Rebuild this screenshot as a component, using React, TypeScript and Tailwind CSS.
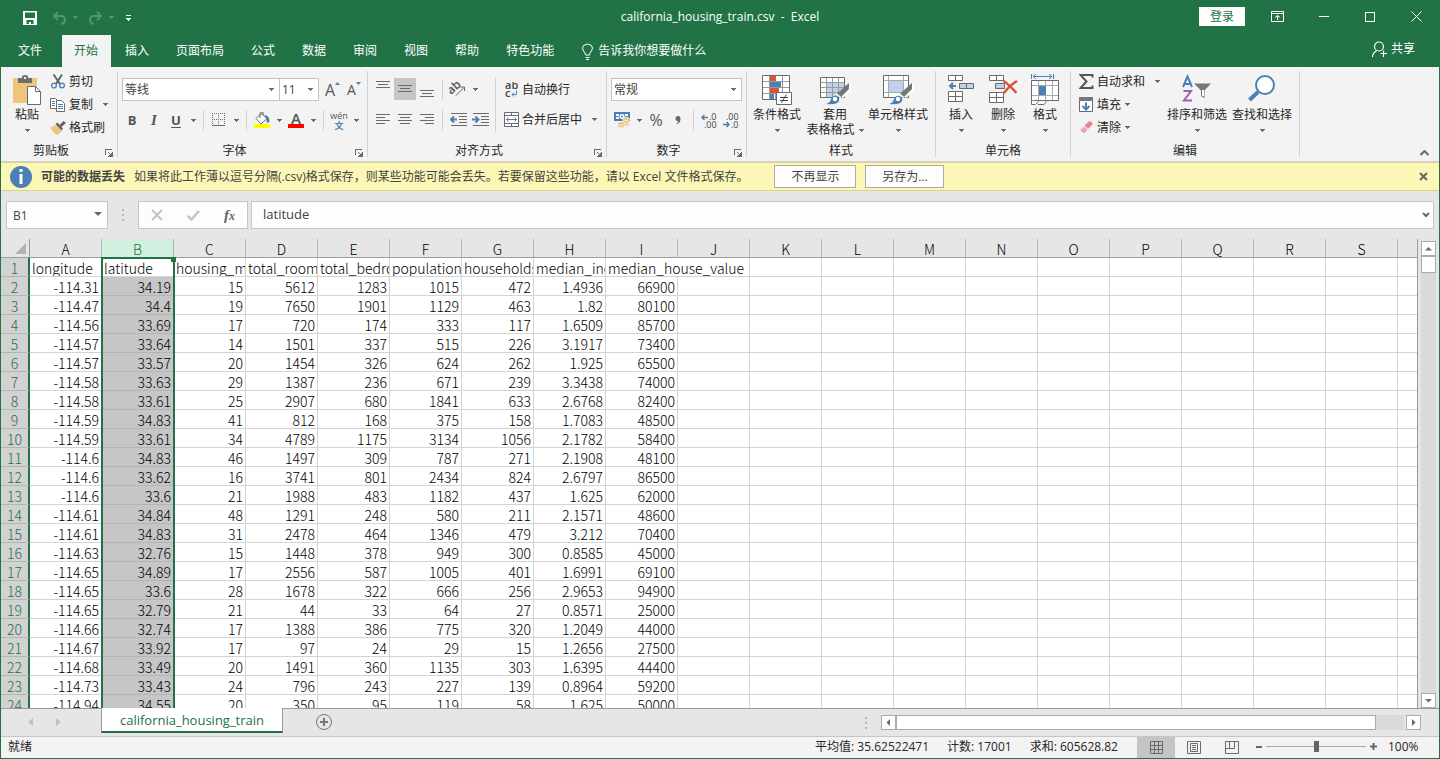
import type { ReactNode } from 'react';

const GRAY = '#6a6a6a';
const BLUE = '#4a80b5';

const TABS = ['插入', '页面布局', '公式', '数据', '审阅', '视图', '帮助', '特色功能'];

const COLUMNS = 'ABCDEFGHIJKLMNOPQRS'.split('');

const HEADERS = [
  'longitude',
  'latitude',
  'housing_median_age',
  'total_rooms',
  'total_bedrooms',
  'population',
  'households',
  'median_income',
  'median_house_value',
];

const ROWS = [
  ['-114.31', '34.19', '15', '5612', '1283', '1015', '472', '1.4936', '66900'],
  ['-114.47', '34.4', '19', '7650', '1901', '1129', '463', '1.82', '80100'],
  ['-114.56', '33.69', '17', '720', '174', '333', '117', '1.6509', '85700'],
  ['-114.57', '33.64', '14', '1501', '337', '515', '226', '3.1917', '73400'],
  ['-114.57', '33.57', '20', '1454', '326', '624', '262', '1.925', '65500'],
  ['-114.58', '33.63', '29', '1387', '236', '671', '239', '3.3438', '74000'],
  ['-114.58', '33.61', '25', '2907', '680', '1841', '633', '2.6768', '82400'],
  ['-114.59', '34.83', '41', '812', '168', '375', '158', '1.7083', '48500'],
  ['-114.59', '33.61', '34', '4789', '1175', '3134', '1056', '2.1782', '58400'],
  ['-114.6', '34.83', '46', '1497', '309', '787', '271', '2.1908', '48100'],
  ['-114.6', '33.62', '16', '3741', '801', '2434', '824', '2.6797', '86500'],
  ['-114.6', '33.6', '21', '1988', '483', '1182', '437', '1.625', '62000'],
  ['-114.61', '34.84', '48', '1291', '248', '580', '211', '2.1571', '48600'],
  ['-114.61', '34.83', '31', '2478', '464', '1346', '479', '3.212', '70400'],
  ['-114.63', '32.76', '15', '1448', '378', '949', '300', '0.8585', '45000'],
  ['-114.65', '34.89', '17', '2556', '587', '1005', '401', '1.6991', '69100'],
  ['-114.65', '33.6', '28', '1678', '322', '666', '256', '2.9653', '94900'],
  ['-114.65', '32.79', '21', '44', '33', '64', '27', '0.8571', '25000'],
  ['-114.66', '32.74', '17', '1388', '386', '775', '320', '1.2049', '44000'],
  ['-114.67', '33.92', '17', '97', '24', '29', '15', '1.2656', '27500'],
  ['-114.68', '33.49', '20', '1491', '360', '1135', '303', '1.6395', '44400'],
  ['-114.73', '33.43', '24', '796', '243', '227', '139', '0.8964', '59200'],
  ['-114.94', '34.55', '20', '350', '95', '119', '58', '1.625', '50000'],
];

const Arrow = ({ className = 'text-[#6a6a6a]' }: { className?: string }) => (
  <svg className={className} width="5" height="3" viewBox="0 0 5 3" shapeRendering="crispEdges">
    <path d="M0 0h5v1H4v1H3v1H2V2H1V1H0z" fill="currentColor" />
  </svg>
);

const ArrowButton = ({ label }: { label: string }) => (
  <button aria-label={label} className="flex h-[22px] w-3 items-center justify-center">
    <Arrow />
  </button>
);

const IconButton = ({ label, active, children }: { label: string; active?: boolean; children: ReactNode }) => (
  <button
    aria-label={label}
    className={`flex h-[22px] w-[22px] items-center justify-center text-[#555] ${active ? 'bg-[#c5c5c5]' : ''}`}
  >
    {children}
  </button>
);

const Divider = () => <div className="mx-1 h-[21px] w-px bg-[#d2d2d2]" />;

const Group = ({ title, width, launcher, children }: { title: string; width: string; launcher?: boolean; children: ReactNode }) => (
  <section className={`flex flex-col border-r border-[#d2d2d2] ${width}`}>
    <div className="flex h-[73px]">{children}</div>
    <div className="flex h-[13px] items-center justify-center">
      <span className={`flex-1 text-center leading-[13px] ${launcher ? 'pr-1' : ''}`}>{title}</span>
      {launcher && (
        <button aria-label={`${title}设置`} className="mt-1 mr-1">
          <svg width="8" height="8" viewBox="0 0 8 8" shapeRendering="crispEdges">
            <path d="M0.5 6V0.5H7M3 3l3 3M7.5 3v4.5H3" fill="none" stroke={GRAY} />
            <path d="M7 3v4H3z" fill={GRAY} />
          </svg>
        </button>
      )}
    </div>
  </section>
);

const BigButton = ({ icon, width, lines }: { icon: ReactNode; width: string; lines: string[] }) => (
  <button className={`flex flex-col items-center self-start pt-[3px] leading-4 whitespace-nowrap ${width}`}>
    <span className="flex h-[33px] items-start justify-center">{icon}</span>
    <span>{lines[0]}</span>
    <span className="flex h-[14px] items-center gap-1">
      {lines[1]}
      <Arrow />
    </span>
  </button>
);

const SmallButton = ({ icon, text, arrow }: { icon: ReactNode; text: string; arrow?: string }) => (
  <button className="flex h-[21px] items-center whitespace-nowrap">
    <span className="flex w-[22px] justify-center">{icon}</span>
    {text}
    {arrow && (
      <span className={arrow}>
        <Arrow />
      </span>
    )}
  </button>
);

const Combo = ({ label, value, width }: { label: string; value: string; width: string }) => (
  <div className={`relative flex ${width}`}>
    <select
      aria-label={label}
      className="h-[23px] w-full appearance-none border border-[#c3c3c3] bg-white pl-0.5 text-[12px] text-[#444]"
    >
      <option>{value}</option>
    </select>
    <span className="pointer-events-none absolute top-2.5 right-1.5">
      <Arrow />
    </span>
  </div>
);

/* Horizontal rules used by the alignment icons: [y, x, width] */
const Lines = ({ rows }: { rows: number[][] }) => (
  <svg width="14" height="16" viewBox="0 0 14 16" fill={GRAY} shapeRendering="crispEdges">
    {rows.map(([y, x, w]) => (
      <rect key={y} x={x} y={y} width={w} height="1" />
    ))}
  </svg>
);

const Indent = ({ right }: { right?: boolean }) => (
  <svg width="17" height="14" viewBox="0 0 17 14">
    <path d="M1 1.5h16M9 4.5h8M9 7.5h8M9 10.5h8M1 13.5h16" stroke={GRAY} fill="none" />
    <path
      d={right ? 'M0 7.5h6M3.5 4.5l3 3-3 3' : 'M7 7.5H1M4 4.5l-3 3 3 3'}
      stroke={BLUE}
      strokeWidth="2"
      fill="none"
    />
  </svg>
);

const PasteIcon = () => (
  <svg width="30" height="32" viewBox="0 0 30 32">
    <path d="M1 4h24v25H1z" fill="#edc57c" />
    <path d="M6 4h4V3q0-2 3-2t3 2v1h4v5H6z" fill="#6e6e6e" />
    <path d="M12 3h2v2h-2z" fill="#f3f3f3" />
    <path d="M15.5 12.5h8l5 5v13h-13z" fill="#fff" stroke={GRAY} />
    <path d="M23.5 12.5v5h5" fill="none" stroke={GRAY} />
  </svg>
);

const CutIcon = () => (
  <svg width="14" height="15" viewBox="0 0 14 15" fill="none">
    <path d="M2.5 0.5L9 10M11 0.5L5 10" stroke="#666" strokeWidth="2" />
    <circle cx="3" cy="11.5" r="2.4" stroke={BLUE} strokeWidth="1.3" />
    <circle cx="11" cy="11.5" r="2.4" stroke={BLUE} strokeWidth="1.3" />
  </svg>
);

const CopyIcon = () => (
  <svg width="16" height="14" viewBox="0 0 16 14">
    <path d="M0.5 0.5h5l2 2v8h-7z" fill="#fff" stroke={GRAY} />
    <path d="M2 3.5h3M2 5.5h3M2 7.5h3" stroke={BLUE} />
    <path d="M6.5 2.5h5l3 3v8h-8z" fill="#fff" stroke={GRAY} />
    <path d="M8 6.5h5M8 8.5h5M8 10.5h5" stroke={BLUE} />
  </svg>
);

const PainterIcon = () => (
  <svg width="16" height="14" viewBox="0 0 16 14">
    <path d="M0 6.5l6-2.5 6 6-4.5 4q-3-1-4.5-3.5z" fill="#edc57c" />
    <path d="M5.5 3l2-1.5 5.5 6-1.5 2z" fill="#666" />
    <path d="M9.5 4l4-4L16 2l-4.5 4z" fill="#666" />
  </svg>
);

const Brush = () => (
  <>
    <path d="M33 8v7l-9 9-5-4z" fill="#fff" />
    <path d="M30 9v6l-8 8-4-3.5z" fill="#777" />
    <path d="M17 19.5l5 4.5" stroke="#f3f3f3" strokeWidth="1.5" />
    <path d="M7 30q4-1 5-5 2-4 6-3 3 2 2 5-2 4-13 3z" fill={BLUE} />
    <circle cx="16" cy="25" r="2.2" fill="#fff" />
  </>
);

const ConditionalIcon = () => (
  <svg width="32" height="31" viewBox="0 0 32 31">
    <path d="M1.5 1.5h27v24h-27z" fill="#fff" />
    <path d="M1.5 7.5h27M1.5 13.5h27M1.5 19.5h27M8.5 1.5v24M14.5 1.5v24M21.5 1.5v24" fill="none" stroke="#9a9a9a" />
    <path d="M9 2h6v5H9zM9 14h9v5H9z" fill="#d65532" />
    <path d="M9 8h11v5H9zM9 20h4v5H9z" fill={BLUE} />
    <path d="M1.5 1.5h27v24h-27z" fill="none" stroke={GRAY} />
    <path d="M15.5 18.5h15v12h-15z" fill="#fff" stroke={GRAY} />
    <path d="M19 23.5h8M19 26.5h8M25.5 20.5l-5 8" stroke="#444" fill="none" />
  </svg>
);

const TableStyleIcon = () => (
  <svg width="32" height="31" viewBox="0 0 32 31">
    <path d="M1.5 3.5h24v20h-24z" fill="#fff" />
    <path d="M8 9h17v14H8z" fill="#bed3ea" />
    <path d="M1.5 8.5h24M1.5 13.5h24M1.5 18.5h24M7.5 3.5v20M13.5 3.5v20M19.5 3.5v20" fill="none" stroke="#9a9a9a" />
    <path d="M1.5 3.5h24v20h-24z" fill="none" stroke={GRAY} />
    <Brush />
  </svg>
);

const CellStyleIcon = () => (
  <svg width="32" height="31" viewBox="0 0 32 31">
    <path d="M1.5 1.5h25v22h-25z" fill="#fff" />
    <path d="M1.5 6.5h25M1.5 18.5h25M6.5 1.5v22M21.5 1.5v22" fill="none" stroke="#aaa" />
    <path d="M7 7h14v11H7z" fill="#bed3ea" />
    <path d="M1.5 1.5h25v22h-25z" fill="none" stroke={GRAY} />
    <Brush />
  </svg>
);

const InsertIcon = () => (
  <svg width="28" height="30" viewBox="0 0 28 30">
    <g fill="#fff" stroke={GRAY}>
      <path d="M1.5 1.5h14v5h-14zM8.5 1.5v5M1.5 17.5h14v10h-14zM1.5 22.5h14M8.5 17.5v10" />
      <path d="M12.5 9.5h14v5h-14zM19.5 9.5v5" fill="#bed3ea" />
    </g>
    <path d="M9 12H3M6 9l-3 3 3 3" stroke={BLUE} strokeWidth="2" fill="none" />
  </svg>
);

const DeleteIcon = () => (
  <svg width="30" height="30" viewBox="0 0 30 30">
    <g fill="#fff" stroke={GRAY}>
      <path d="M1.5 1.5h14v5h-14zM8.5 1.5v5M1.5 18.5h14v10h-14zM1.5 23.5h14M8.5 18.5v10" />
      <path d="M7.5 9.5h9v5h-9z" fill="#bed3ea" />
    </g>
    <path d="M15.5 7q5 3 13 12M29 7q-8 5-13 12" stroke="#d65532" strokeWidth="2.5" fill="none" />
  </svg>
);

const FormatIcon = () => (
  <svg width="30" height="32" viewBox="0 0 30 32">
    <path d="M1.5 0v5M23.5 0v5M3 2.5h19M6 0L3 2.5 6 5M19 0l3 2.5L19 5" stroke={BLUE} fill="none" />
    <path d="M1.5 6.5h27v20h-27z" fill="#fff" />
    <path d="M1.5 11.5h27M1.5 21.5h27M8.5 6.5v20M15.5 6.5v20M22.5 6.5v20" stroke="#aaa" fill="none" />
    <path d="M1.5 6.5h27v20h-27z" fill="none" stroke={GRAY} />
    <path d="M9 12h7v9H9z" fill={BLUE} />
    <path d="M1.5 26.5v4h4l3-3M8 30.5h6l3-4" fill="#fff" stroke={GRAY} />
  </svg>
);

const SortFilterIcon = () => (
  <svg width="30" height="30" viewBox="0 0 30 30">
    <path d="M12 9.5h17l-6.5 7V24l-3.5-2v-5.5z" fill="#777" />
    <path d="M20 16h2v6h-2z" fill="#fff" />
    <path d="M1 13L5.5 2.5 10 13M3 10h5" fill="none" stroke={BLUE} strokeWidth="2" />
    <path d="M1.5 17H9l-7 9.5h8" fill="none" stroke="#9660b9" strokeWidth="2" />
  </svg>
);

const FindIcon = () => (
  <svg width="28" height="28" viewBox="0 0 28 28">
    <path d="M1.5 26L10 18" stroke={BLUE} strokeWidth="4" />
    <circle cx="17" cy="11" r="9" fill="#fff" stroke={BLUE} strokeWidth="2" />
  </svg>
);

const TitleBar = () => (
  <header className="grid h-[35px] grid-cols-3 items-center pb-0.5 text-white">
    <div className="flex items-center pt-0.5 pl-[22px]">
      <button aria-label="保存" className="w-[29px]">
        <svg width="14" height="14" viewBox="0 0 14 14">
          <path d="M0 0h14v14H0zM2 1.5V7h10V1.5zM3.5 9v4H6v-2h2v2h2.5V9z" fill="#fff" fillRule="evenodd" />
        </svg>
      </button>
      <button aria-label="撤消" className="flex items-center gap-1.5 text-[#559371]">
        <svg width="15" height="14" viewBox="0 0 15 14" fill="none" stroke="currentColor" strokeWidth="2">
          <path d="M6 1L2 5l4 4M2 5h7q4 0 4 4 0 3-4 4" />
        </svg>
        <Arrow className="text-[#559371]" />
      </button>
      <button aria-label="恢复" className="ml-2.5 flex items-center gap-1.5 text-[#559371]">
        <svg width="15" height="14" viewBox="0 0 15 14" fill="none" stroke="currentColor" strokeWidth="2">
          <path d="M9 1l4 4-4 4M13 5H6Q2 5 2 9q0 3 4 4" />
        </svg>
        <Arrow className="text-[#559371]" />
      </button>
      <button aria-label="自定义快速访问工具栏" className="ml-3 flex flex-col items-center gap-0.5">
        <span className="h-px w-[5px] bg-white" />
        <Arrow className="text-white" />
      </button>
    </div>
    <h1 className="text-center whitespace-pre">california_housing_train.csv  -  Excel</h1>
    <div className="flex items-center justify-end">
      <button className="mr-[26px] h-[19px] w-[46px] bg-white text-[#217346]">登录</button>
      <button aria-label="功能区显示选项" className="w-12">
        <svg width="13" height="11" viewBox="0 0 13 11" fill="none" stroke="#fff">
          <path d="M0.5 0.5h12v10H0.5zM0.5 2.5h12M6.5 9V4.5M4 6.5l2.5-2 2.5 2" />
        </svg>
      </button>
      <button aria-label="最小化" className="flex w-[46px] items-center">
        <span className="h-px w-2.5 bg-white" />
      </button>
      <button aria-label="最大化" className="flex w-[46px] items-center">
        <span className="h-2.5 w-2.5 border border-white" />
      </button>
      <button aria-label="关闭" className="w-7">
        <svg width="11" height="11" viewBox="0 0 11 11" stroke="#fff">
          <path d="M0.5 0.5l10 10M10.5 0.5l-10 10" />
        </svg>
      </button>
    </div>
  </header>
);

const TabBar = () => (
  <nav className="flex h-8 gap-px text-white">
    <button className="w-[60px] pr-0.5">文件</button>
    <button className="bg-[#f3f3f3] pr-[13px] pl-3 text-[#217346]">开始</button>
    {TABS.map((tab) => (
      <button key={tab} className="px-[13px]">
        {tab}
      </button>
    ))}
    <button className="flex items-center gap-1 px-[13px]">
      <svg width="13" height="17" viewBox="0 0 13 17" fill="none" stroke="#fff">
        <path d="M4.5 12q0-2-2-4-2-3 0-5.500 4-3 8 0 2 2.500 0 5.500-2 2-2 4zM4.500 14.500h4M5 16.500h3" />
      </svg>
      告诉我你想要做什么
    </button>
    <button className="mr-6 ml-auto flex items-center gap-1 pb-1">
      <svg width="15" height="17" viewBox="0 0 15 17" fill="none" stroke="#fff" strokeWidth="1.2">
        <circle cx="7" cy="5.5" r="4.5" />
        <path d="M0.5 16q0-4 4-6M8.5 12.5H15M11.5 9.5V16" />
      </svg>
      共享
    </button>
  </nav>
);

const Ribbon = () => (
  <div className="flex h-[95px] border-b border-[#d2d2d2] bg-[#f3f3f3] py-1 text-[#262626]">
    <Group title="剪贴板" width="w-[117px]" launcher>
      <BigButton icon={<PasteIcon />} width="w-[52px]" lines={['粘贴']} />
      <div className="-ml-1.5 flex flex-col gap-0.5">
        <SmallButton icon={<CutIcon />} text="剪切" />
        <SmallButton icon={<CopyIcon />} text="复制" arrow="ml-2.5" />
        <SmallButton icon={<PainterIcon />} text="格式刷" />
      </div>
    </Group>

    <Group title="字体" width="w-[250px]" launcher>
      <div className="flex flex-col gap-2 pt-[7px] pl-[3px]">
        <div className="flex items-center pl-px">
          <Combo label="字体" value="等线" width="w-[158px]" />
          <div className="-ml-px flex">
            <Combo label="字号" value="11" width="w-[40px]" />
          </div>
          <button aria-label="增大字号" className="ml-1.5 flex h-[22px] w-[18px] items-center text-[16px] text-[#555]">
            A
            <svg className="mb-3" width="5" height="3" viewBox="0 0 5 3">
              <path d="M0 3L2.5 0 5 3z" fill={BLUE} />
            </svg>
          </button>
          <button aria-label="减小字号" className="ml-1 flex h-[22px] w-[18px] items-center text-[14px] text-[#555]">
            A
            <svg className="mb-3" width="5" height="3" viewBox="0 0 5 3">
              <path d="M0 0h5L2.5 3z" fill={BLUE} />
            </svg>
          </button>
        </div>
        <div className="flex items-center">
          <IconButton label="加粗">
            <b className="text-[13px]">B</b>
          </IconButton>
          <IconButton label="倾斜">
            <i className="font-['Liberation_Serif'] text-[15px] font-bold">I</i>
          </IconButton>
          <IconButton label="下划线">
            <b className="text-[13px] underline underline-offset-2">U</b>
          </IconButton>
          <ArrowButton label="下划线类型" />
          <Divider />
          <IconButton label="边框">
            <svg width="14" height="14" viewBox="0 0 14 14" stroke={GRAY} fill="none">
              <path d="M0 0.5h13M0 6.5h13M0.5 0v12M6.5 0v12M12.5 0v12" strokeDasharray="1 1" />
              <path d="M0 12.5h13" />
            </svg>
          </IconButton>
          <ArrowButton label="边框类型" />
          <Divider />
          <IconButton label="填充颜色">
            <svg width="16" height="16" viewBox="0 0 16 16">
              <path d="M2 6.5L7 1.5l6 5-6 5.5z" fill="#fff" stroke={GRAY} />
              <path d="M6 6V2q0-2 2-2t1 3" fill="none" stroke={GRAY} />
              <path d="M10.5 3q5 0 5 7L13 11l-1-5z" fill={BLUE} />
              <path d="M0 12h16v4H0z" fill="#ff0" />
            </svg>
          </IconButton>
          <ArrowButton label="其他填充颜色" />
          <IconButton label="字体颜色">
            <span className="h-4 w-4 border-b-4 border-[#f00] text-[15px] leading-3 font-semibold">A</span>
          </IconButton>
          <ArrowButton label="其他字体颜色" />
          <Divider />
          <IconButton label="显示拼音">
            <span className="flex flex-col items-center text-[9px] leading-[10px]">
              wén
              <span className="text-[9px] leading-[9px] font-bold text-[#4a80b5]">文</span>
            </span>
          </IconButton>
          <ArrowButton label="拼音选项" />
        </div>
      </div>
    </Group>

    <Group title="对齐方式" width="w-[239px]" launcher>
      <div className="flex flex-col gap-2 pt-[7px] pl-1">
        <div className="flex items-center">
          <IconButton label="顶端对齐"><Lines rows={[[0, 0, 14], [3, 2, 10], [6, 0, 14]]} /></IconButton>
          <IconButton label="垂直居中" active><Lines rows={[[4, 0, 14], [7, 2, 10], [10, 0, 14]]} /></IconButton>
          <IconButton label="底端对齐"><Lines rows={[[9, 0, 14], [12, 2, 10], [15, 0, 14]]} /></IconButton>
          <Divider />
          <IconButton label="方向">
            <svg width="18" height="16" viewBox="0 0 18 16">
              <text x="0" y="11" fontSize="12" fontWeight="600" fill="#555" transform="rotate(-42 5 10)">ab</text>
              <path d="M7 14.5l8-8M11.5 6h4v4" fill="none" stroke={GRAY} />
            </svg>
          </IconButton>
          <ArrowButton label="方向选项" />
        </div>
        <div className="flex items-center">
          <IconButton label="左对齐"><Lines rows={[[3, 0, 14], [6, 0, 9], [9, 0, 14], [12, 0, 9]]} /></IconButton>
          <IconButton label="居中"><Lines rows={[[3, 0, 14], [6, 2, 10], [9, 0, 14], [12, 2, 10]]} /></IconButton>
          <IconButton label="右对齐"><Lines rows={[[3, 0, 14], [6, 5, 9], [9, 0, 14], [12, 5, 9]]} /></IconButton>
          <Divider />
          <IconButton label="减少缩进量"><Indent /></IconButton>
          <IconButton label="增加缩进量"><Indent right /></IconButton>
        </div>
      </div>
      <div className="mx-1 mt-1.5 h-[55px] w-px bg-[#d2d2d2]" />
      <div className="flex flex-col gap-[9px] pt-2">
        <SmallButton
          icon={
            <svg width="13" height="16" viewBox="0 0 13 16">
              <text x="0" y="7" fontSize="11" fill="#444" fontWeight="600">ab</text>
              <text x="0" y="15" fontSize="11" fill="#444" fontWeight="600">c</text>
              <path d="M11.5 8.5v4H7M9 10.5l-2 2 2 2" fill="none" stroke={BLUE} />
            </svg>
          }
          text="自动换行"
        />
        <SmallButton
          icon={
            <svg width="15" height="15" viewBox="0 0 15 15" fill="none">
              <path d="M0.5 0.5h14v14H0.5z" fill="#fff" stroke={GRAY} />
              <path d="M0.5 3.5h14M0.5 11.5h14M7.5 0.5v3M7.5 11.5v3" stroke={GRAY} />
              <path d="M2 7.5h11M4.5 5.5l-2 2 2 2M10.5 5.5l2 2-2 2" stroke={BLUE} />
            </svg>
          }
          text="合并后居中"
          arrow="ml-2.5"
        />
      </div>
    </Group>

    <Group title="数字" width="w-[140px]" launcher>
      <div className="flex flex-col gap-2 pt-[7px] pl-1">
        <Combo label="数字格式" value="常规" width="w-[131px]" />
        <div className="flex items-center">
          <IconButton label="会计数字格式">
            <svg width="17" height="16" viewBox="0 0 17 16">
              <path d="M0 0h16v9H0z" fill={BLUE} />
              <path d="M2 2h3v2H2zM11 2h3v2h-3zM2 5h3v2H2z" fill="#fff" />
              <circle cx="8" cy="4.500" r="2.500" fill="#fff" />
              <circle cx="8" cy="4.500" r="1" fill={BLUE} />
              <g fill="#edc57c" stroke="#f3f3f3" strokeWidth="0.8">
                <ellipse cx="12" cy="12" rx="3.5" ry="1.8" />
                <ellipse cx="12" cy="9.5" rx="3.5" ry="1.8" />
                <ellipse cx="12" cy="7" rx="3.5" ry="1.8" />
                <ellipse cx="7" cy="14" rx="3.5" ry="1.8" />
                <ellipse cx="7" cy="11.5" rx="3.5" ry="1.8" />
              </g>
            </svg>
          </IconButton>
          <ArrowButton label="会计格式选项" />
          <IconButton label="百分比样式"><span className="text-[16px]">%</span></IconButton>
          <IconButton label="千位分隔样式">
            <svg width="6" height="9" viewBox="0 0 6 9">
              <path d="M0.5 2.5Q0.5 0 3 0t2.5 3Q5.5 7 1 8.5q2-2 2-3.500-2.500 0-2.500-2.500z" fill="#666" />
            </svg>
          </IconButton>
          <Divider />
          <IconButton label="增加小数位数">
            <svg width="16" height="15" viewBox="0 0 16 15" fontSize="9" fill="#444">
              <text x="8" y="7">.0</text>
              <text x="3" y="15">.00</text>
              <path d="M7 4.5H1M3.5 2L1 4.5 3.5 7" stroke={BLUE} strokeWidth="1.5" fill="none" />
            </svg>
          </IconButton>
          <IconButton label="减少小数位数">
            <svg width="16" height="15" viewBox="0 0 16 15" fontSize="9" fill="#444">
              <text x="3" y="7">.00</text>
              <text x="8" y="15">.0</text>
              <path d="M0 11.5h6M3.5 9L6 11.5 3.5 14" stroke={BLUE} strokeWidth="1.5" fill="none" />
            </svg>
          </IconButton>
        </div>
      </div>
    </Group>

    <Group title="样式" width="w-[189px]">
      <div className="flex gap-[3px] pl-[5px]">
        <BigButton icon={<ConditionalIcon />} width="w-[50px]" lines={['条件格式']} />
        <BigButton icon={<TableStyleIcon />} width="w-[60px]" lines={['套用', '表格格式']} />
        <BigButton icon={<CellStyleIcon />} width="w-[60px]" lines={['单元格样式']} />
      </div>
    </Group>

    <Group title="单元格" width="w-[135px]">
      <div className="flex pl-1">
        <BigButton icon={<InsertIcon />} width="w-[42px]" lines={['插入']} />
        <BigButton icon={<DeleteIcon />} width="w-[42px]" lines={['删除']} />
        <BigButton icon={<FormatIcon />} width="w-[42px]" lines={['格式']} />
      </div>
    </Group>

    <Group title="编辑" width="w-[229px]">
      <div className="flex w-[93px] flex-col gap-0.5 pl-1">
        <SmallButton
          icon={
            <svg width="15" height="15" viewBox="0 0 15 15">
              <path d="M13.5 3.5V1h-12l6 6.5-6 6.5h12v-2.5" fill="none" stroke="#555" strokeWidth="2" />
            </svg>
          }
          text="自动求和"
          arrow="ml-2.5"
        />
        <SmallButton
          icon={
            <svg width="15" height="15" viewBox="0 0 15 15">
              <path d="M0.5 0.5h13v14H0.5z" fill="#fff" stroke={GRAY} />
              <path d="M0 0h14v4H0z" fill="#777" />
              <path d="M7 5.5v7M3.5 9L7 12.5 10.5 9" fill="none" stroke={BLUE} strokeWidth="2" />
            </svg>
          }
          text="填充"
          arrow="ml-1"
        />
        <SmallButton
          icon={
            <svg width="13" height="13" viewBox="0 0 13 13">
              <path d="M4.5 4.5l4.500-4q2-1 4 2.500l-5 5z" fill="#e8829a" />
              <path d="M4 5.5L7.5 9l-3 3Q1 11 0.5 8.5z" fill="#f0a5b6" />
            </svg>
          }
          text="清除"
          arrow="ml-1"
        />
      </div>
      <div className="flex gap-[5px] pl-[3px]">
        <BigButton icon={<SortFilterIcon />} width="w-[60px]" lines={['排序和筛选']} />
        <BigButton icon={<FindIcon />} width="w-[60px]" lines={['查找和选择']} />
      </div>
    </Group>

    <button aria-label="折叠功能区" className="mr-2.5 mb-px ml-auto self-end">
      <svg width="9" height="6" viewBox="0 0 9 6">
        <path d="M0.5 5l4-4 4 4" fill="none" stroke={GRAY} strokeWidth="2" />
      </svg>
    </button>
  </div>
);

const MessageBar = () => (
  <div className="flex h-[29px] items-center border-y border-[#d9d48c] bg-[#fcf7b6] text-[#444]">
    <svg className="mx-[9px]" width="22" height="22" viewBox="0 0 22 22">
      <circle cx="11" cy="11" r="11" fill={BLUE} />
      <path d="M9.5 3h3v3h-3zM9.5 8h3v10h-3z" fill="#fff" />
    </svg>
    <strong>可能的数据丢失</strong>
    <p className="ml-[9px]">如果将此工作薄以逗号分隔(.csv)格式保存，则某些功能可能会丢失。若要保留这些功能，请以 Excel 文件格式保存。</p>
    <button className="ml-[26px] h-[23px] w-[82px] border border-[#ababab] bg-[#fdfdfd]">不再显示</button>
    <button className="ml-[9px] h-[23px] w-[79px] border border-[#ababab] bg-[#fdfdfd]">另存为...</button>
    <button aria-label="关闭消息" className="mr-[11px] ml-auto">
      <svg width="9" height="9" viewBox="0 0 9 9" stroke="#666" strokeWidth="2">
        <path d="M1 1l7 7M8 1L1 8" />
      </svg>
    </button>
  </div>
);

const Dots = () => (
  <span className="flex flex-col gap-[3px]">
    <span className="h-0.5 w-0.5 bg-[#b5b5b5]" />
    <span className="h-0.5 w-0.5 bg-[#b5b5b5]" />
    <span className="h-0.5 w-0.5 bg-[#b5b5b5]" />
  </span>
);

const FormulaBar = () => (
  <div className="flex h-12 items-center px-[5px] text-[#444]">
    <div className="relative flex w-[102px]">
      <input aria-label="名称框" className="h-7 w-full border border-[#c6c6c6] bg-[#fdfdfd] px-1.5" defaultValue="B1" />
      <svg className="absolute top-[11px] right-1.5" width="8" height="4" viewBox="0 0 8 4">
        <path d="M0 0h8L4 4z" fill={GRAY} />
      </svg>
    </div>
    <span className="flex w-[30px] justify-center">
      <Dots />
    </span>
    <div className="flex h-7 w-[110px] items-center justify-around border border-[#c6c6c6] bg-[#fdfdfd]">
      <button aria-label="取消">
        <svg width="12" height="12" viewBox="0 0 12 12" stroke="#c3c3c3" strokeWidth="2">
          <path d="M1 1l10 10M11 1L1 11" />
        </svg>
      </button>
      <button aria-label="输入">
        <svg width="13" height="11" viewBox="0 0 13 11" fill="none" stroke="#c3c3c3" strokeWidth="2.5">
          <path d="M1 6l3.5 3.5L12 1" />
        </svg>
      </button>
      <button aria-label="插入函数" className="font-['Liberation_Serif'] text-[15px] leading-4 font-bold text-[#666] italic">
        f<span className="text-[12px]">x</span>
      </button>
    </div>
    <div className="relative ml-[3px] flex flex-1">
      <input
        aria-label="编辑栏"
        className="h-7 w-full border border-[#c6c6c6] bg-[#fdfdfd] px-[11px] pb-0.5 text-[13px]"
        defaultValue="latitude"
      />
      <svg className="absolute top-[11px] right-1" width="8" height="6" viewBox="0 0 8 6">
        <path d="M1 1l3 3 3-3" fill="none" stroke={GRAY} strokeWidth="2" />
      </svg>
    </div>
  </div>
);

const CELL = 'h-[19px] pt-0.5 pb-0 leading-4';

const Grid = () => (
  <div className="relative min-w-0 flex-1 overflow-hidden border-r border-[#9b9b9b]">
    <table className="w-full table-fixed border-separate border-spacing-0 font-['Noto_Sans_CJK_SC',sans-serif] text-[14px] font-light text-black">
      <colgroup>
        <col className="w-[29px]" />
        {COLUMNS.map((c) => (
          <col key={c} className="w-[72px]" />
        ))}
        <col />
      </colgroup>
      <thead>
        <tr className="bg-[#e6e6e6]">
          <th className="h-[19px] border-r border-b border-[#9b9b9b] p-0">
            <svg className="mr-[3px] ml-auto" width="11" height="11" viewBox="0 0 11 11">
              <path d="M11 0v11H0z" fill="#b2b2b2" />
            </svg>
          </th>
          {COLUMNS.map((c) => (
            <th
              key={c}
              scope="col"
              className={`${CELL} border-r border-b border-r-[#b4b4b4] border-b-[#9b9b9b] px-0 font-light ${
                c === 'B' ? 'bg-[#d2f0e0] text-[#217346]' : 'text-black'
              }`}
            >
              {c}
            </th>
          ))}
          <th className="border-b border-[#9b9b9b]" />
        </tr>
      </thead>
      <tbody>
        {[HEADERS, ...ROWS].map((row, r) => (
          <tr key={r} className="bg-white">
            <th
              scope="row"
              className={`${CELL} border-r-2 border-b border-r-[#217346] border-b-[#b4b4b4] bg-[#d2d2d2] px-0 font-light text-[#217346]`}
            >
              {r + 1}
            </th>
            {COLUMNS.map((c, i) => (
              <td
                key={c}
                className={`${CELL} border-b border-[#d4d4d4] px-0.5 whitespace-nowrap ${r === 0 ? 'text-left' : 'text-right'} ${
                  r === 0 && i === 8 ? '' : 'overflow-hidden border-r'
                } ${i === 1 && r > 0 ? 'border-b-[#b4b4b4] bg-[#c6c6c6]' : ''}`}
              >
                {row[i]}
              </td>
            ))}
            <td className="border-b border-[#d4d4d4]" />
          </tr>
        ))}
      </tbody>
    </table>
    {/* Selection frame of column B */}
    <div className="pointer-events-none absolute top-[18px] bottom-0 left-[100px] w-[74px] border-x-2 border-t-2 border-[#217346]">
      <div className="absolute -top-0.5 -right-[3px] h-[5px] w-[5px] bg-[#217346]" />
    </div>
  </div>
);

const ScrollButton = ({ label, d }: { label: string; d: string }) => (
  <button aria-label={label} className="flex h-[15px] w-[15px] items-center justify-center border border-[#ababab] bg-white">
    <svg width="7" height="7" viewBox="0 0 7 7">
      <path d={d} fill={GRAY} />
    </svg>
  </button>
);

const VerticalScroll = () => (
  <div className="mx-[3px] flex w-[15px] flex-col pt-0.5">
    <ScrollButton label="向上滚动" d="M0 5.5L3.5 2 7 5.5z" />
    <div className="flex-1 bg-[#dadada]">
      <div className="h-[17px] border border-[#ababab] bg-white" />
    </div>
    <ScrollButton label="向下滚动" d="M0 2h7L3.5 5.5z" />
  </div>
);

const SheetBar = () => (
  <div className="flex h-7 border-t border-[#9b9b9b]">
    <div className="flex w-[100px] items-center gap-[23px] pb-0.5 pl-[27px]">
      <button aria-label="上一个工作表">
        <svg width="5" height="8" viewBox="0 0 5 8"><path d="M5 0v8L0 4z" fill="#c0c0c0" /></svg>
      </button>
      <button aria-label="下一个工作表">
        <svg width="5" height="8" viewBox="0 0 5 8"><path d="M0 0v8l5-4z" fill="#c0c0c0" /></svg>
      </button>
    </div>
    <button className="-mt-px h-[25px] w-[182px] border-x border-b-2 border-x-[#9b9b9b] border-b-[#217346] bg-white text-[13px] text-[#217346]">
      california_housing_train
    </button>
    <button aria-label="新工作表" className="ml-8 pb-0.5">
      <svg width="18" height="18" viewBox="0 0 18 18" fill="none" stroke="#777">
        <circle cx="9" cy="9" r="7.5" />
        <path d="M5 9h8M9 5v8" strokeWidth="2" />
      </svg>
    </button>
    <div className="mr-[18px] ml-auto flex w-[556px] items-center">
      <Dots />
      <div className="ml-3.5 flex flex-1">
        <ScrollButton label="向左滚动" d="M5 0v7L1.5 3.5z" />
        <div className="flex-1 bg-[#dadada] pr-7">
          <div className="h-[15px] border border-[#ababab] bg-white" />
        </div>
      </div>
      <div className="ml-0.5">
        <ScrollButton label="向右滚动" d="M2 0v7l3.5-3.5z" />
      </div>
    </div>
  </div>
);

const StatusBar = () => (
  <footer className="flex h-[22px] items-center border-t border-[#c6c6c6] bg-[#f3f3f3] pb-0.5 pl-[7px] text-[#262626]">
    <span>就绪</span>
    <div className="ml-auto flex gap-[18px]">
      <span>平均值: 35.62522471</span>
      <span>计数: 17001</span>
      <span>求和: 605628.82</span>
    </div>
    <div className="-mb-0.5 ml-[19px] flex">
      <button aria-label="普通" className="flex h-[21px] w-[38px] items-center justify-center bg-[#c5c5c5]">
        <svg width="13" height="13" viewBox="0 0 13 13" fill="none" stroke={GRAY}>
          <path d="M0.5 0.5h12v12H0.5zM0.5 4.5h12M0.5 8.5h12M4.5 0.5v12M8.5 0.5v12" />
        </svg>
      </button>
      <button aria-label="页面布局视图" className="flex h-[21px] w-[38px] items-center justify-center">
        <svg width="14" height="13" viewBox="0 0 14 13" fill="none" stroke={GRAY}>
          <path d="M0.5 0.5h13v12H0.5zM3.5 2.5h7v8h-7zM5 4.5h4M5 6.5h4M5 8.5h4" />
        </svg>
      </button>
      <button aria-label="分页预览" className="flex h-[21px] w-[38px] items-center justify-center">
        <svg width="14" height="13" viewBox="0 0 14 13" fill="none" stroke={GRAY}>
          <path d="M0.5 0.5h13v12H0.5zM4.5 0.5v7M0.5 7.5h9v-7" />
        </svg>
      </button>
    </div>
    <button aria-label="缩小" className="ml-[5px] flex w-2.5 items-center">
      <span className="h-0.5 w-1.5 bg-[#666]" />
    </button>
    <input
      type="range"
      aria-label="显示比例"
      className="h-[11px] w-[100px] appearance-none bg-[linear-gradient(#ababab,#ababab)] bg-[length:100%_1px] bg-center bg-no-repeat [&::-webkit-slider-thumb]:h-[11px] [&::-webkit-slider-thumb]:w-[5px] [&::-webkit-slider-thumb]:appearance-none [&::-webkit-slider-thumb]:bg-[#666]"
    />
    <button aria-label="放大" className="mr-[11px] ml-1">
      <svg width="7" height="7" viewBox="0 0 7 7" stroke="#666" strokeWidth="2">
        <path d="M0 3.5h7M3.5 0v7" />
      </svg>
    </button>
    <span className="w-[51px]">100%</span>
  </footer>
);

const App = () => {
  return (
    <div
      lang="zh-CN"
      className="flex h-screen flex-col overflow-hidden border-x border-b border-[#217346] bg-[#e6e6e6] font-['Open_Sans','Noto_Sans_CJK_SC',sans-serif] text-[12px] leading-4 [&_svg]:shrink-0"
    >
      <div className="bg-[#217346]">
        <TitleBar />
        <TabBar />
      </div>
      <Ribbon />
      <MessageBar />
      <FormulaBar />
      <main className="flex min-h-0 flex-1">
        <Grid />
        <VerticalScroll />
      </main>
      <SheetBar />
      <StatusBar />
    </div>
  );
};

export default App;
